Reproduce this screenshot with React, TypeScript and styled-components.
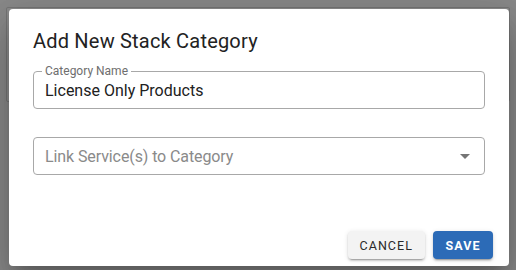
import styled, { createGlobalStyle } from "styled-components";

const GlobalStyle = createGlobalStyle`
  html, body {
    margin: 0;
    padding: 0;
  }
  body {
    font-family: Roboto, "Liberation Sans", Arial, sans-serif;
    background: #ffffff;
  }
`;

export default function App() {
  return (
    <>
      <GlobalStyle />
      <Page>
        <BackCard />
        <Backdrop>
          <Dialog>
            <Title>Add New Stack Category</Title>
            <Content>
              <OutlinedField>
                <Legend>Category Name</Legend>
                <Value>License Only Products</Value>
              </OutlinedField>
              <OutlinedField>
                <Placeholder>Link Service(s) to Category</Placeholder>
                <Caret viewBox="0 0 24 24">
                  <path d="M7 10l5 5 5-5z" />
                </Caret>
              </OutlinedField>
            </Content>
            <Actions>
              <Button variant="default">Cancel</Button>
              <Button variant="primary">Save</Button>
            </Actions>
          </Dialog>
        </Backdrop>
      </Page>
    </>
  );
}

const Page = styled.div`
  position: relative;
  width: 516px;
  height: 270px;
  overflow: hidden;
  background: #fafafa;
  padding: 7px 6px 0;
  box-sizing: border-box;
`;

const BackCard = styled.div`
  height: 93px;
  background: #ffffff;
  border: 1px solid #d6d6d6;
  border-radius: 2px;
`;

const Backdrop = styled.div`
  position: absolute;
  inset: 0;
  background: rgba(0, 0, 0, 0.45);
  display: flex;
  align-items: flex-start;
  justify-content: flex-start;
  padding: 9px 0 0 9px;
  box-sizing: border-box;
`;

const Dialog = styled.div`
  width: 500px;
  height: 257px;
  background: #ffffff;
  border-radius: 4px;
  box-shadow: 0 11px 15px -7px rgba(0, 0, 0, 0.2),
    0 24px 38px 3px rgba(0, 0, 0, 0.14), 0 9px 46px 8px rgba(0, 0, 0, 0.12);
  display: flex;
  flex-direction: column;
  box-sizing: border-box;
`;

const Title = styled.h2`
  margin: 0;
  padding: 16px 24px 14px;
  font-size: 20px;
  font-weight: 400;
  line-height: 32px;
  letter-spacing: 0.2px;
  color: #222222;
`;

const Content = styled.div`
  flex: 1;
  padding: 0 24px;
  display: flex;
  flex-direction: column;
  gap: 28px;
`;

const OutlinedField = styled.div`
  position: relative;
  height: 38px;
  border: 1px solid #a8a8a8;
  border-radius: 4px;
  display: flex;
  align-items: center;
  padding: 0 11px;
  box-sizing: border-box;
`;

const Legend = styled.span`
  position: absolute;
  top: -8px;
  left: 8px;
  padding: 0 3px;
  background: #ffffff;
  font-size: 12px;
  line-height: 14px;
  color: #6e6e6e;
`;

const Value = styled.span`
  font-size: 16px;
  color: #212121;
`;

const Placeholder = styled.span`
  flex: 1;
  font-size: 16px;
  color: #8a8a8a;
  letter-spacing: -0.1px;
`;

const Caret = styled.svg`
  width: 24px;
  height: 24px;
  fill: #757575;
  margin-right: -4px;
`;

const Actions = styled.div`
  display: flex;
  justify-content: flex-end;
  gap: 8px;
  padding: 0 16px 7px;
`;

const Button = styled.button<{ variant: "default" | "primary" }>`
  height: 28px;
  padding: 0 12px;
  border: none;
  border-radius: 4px;
  font-family: Roboto, "Liberation Sans", Arial, sans-serif;
  font-size: 12.5px;
  letter-spacing: 1.05px;
  text-transform: uppercase;
  min-width: 60px;
  background: ${(p) => (p.variant === "primary" ? "#2c6bb7" : "#f3f3f3")};
  color: ${(p) => (p.variant === "primary" ? "#ffffff" : "#2a2a2a")};
  font-weight: ${(p) => (p.variant === "primary" ? 700 : 400)};
  box-shadow: 0 3px 1px -2px rgba(0, 0, 0, 0.2), 0 2px 2px 0 rgba(0, 0, 0, 0.14),
    0 1px 5px 0 rgba(0, 0, 0, 0.12);
`;
